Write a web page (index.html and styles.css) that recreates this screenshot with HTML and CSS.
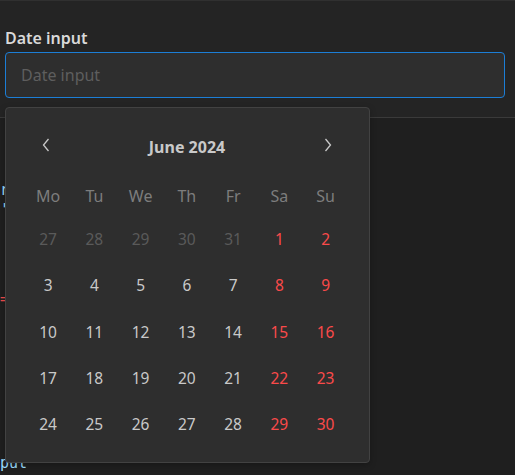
FILE: index.html
```html
<!DOCTYPE html>
<html>
<head>
<meta charset="utf-8">
<link rel="stylesheet" href="styles.css">
</head>
<body>
<div class="top">
  <label class="label">Date input</label>
  <div class="input"><span class="placeholder">Date input</span></div>
</div>
<div class="code">
  <div class="line l1"><span class="tk-blue">r</span></div>
  <div class="line l2"><span class="tk-blue">'</span></div>
  <div class="line l3"><span class="tk-red">=</span></div>
  <div class="line l4"><span class="tk-blue">put</span></div>
</div>
<div class="popover">
  <div class="header">
    <button class="ctrl prev"><svg width="8" height="14" viewBox="0 0 8 14"><path d="M6.5 1 L1.5 7 L6.5 13" fill="none" stroke="#c9c9c9" stroke-width="1.3"/></svg></button>
    <div class="title">June 2024</div>
    <button class="ctrl next"><svg width="8" height="14" viewBox="0 0 8 14"><path d="M1.5 1 L6.5 7 L1.5 13" fill="none" stroke="#c9c9c9" stroke-width="1.3"/></svg></button>
  </div>
  <div class="weekdays">
    <div>Mo</div><div>Tu</div><div>We</div><div>Th</div><div>Fr</div><div>Sa</div><div>Su</div>
  </div>
  <div class="days">
    <div class="out">27</div><div class="out">28</div><div class="out">29</div><div class="out">30</div><div class="out">31</div><div class="we">1</div><div class="we">2</div>
    <div>3</div><div>4</div><div>5</div><div>6</div><div>7</div><div class="we">8</div><div class="we">9</div>
    <div>10</div><div>11</div><div>12</div><div>13</div><div>14</div><div class="we">15</div><div class="we">16</div>
    <div>17</div><div>18</div><div>19</div><div>20</div><div>21</div><div class="we">22</div><div class="we">23</div>
    <div>24</div><div>25</div><div>26</div><div>27</div><div>28</div><div class="we">29</div><div class="we">30</div>
  </div>
</div>
</body>
</html>
```
FILE: styles.css
```css
html, body {
  margin: 0;
  padding: 0;
}
body {
  background: #1f1f1f;
  font-family: "Noto Sans", "Open Sans", sans-serif;
  width: 515px;
  height: 475px;
  overflow: hidden;
  position: relative;
}
.top {
  background: #242424;
  border-top: 1px solid #303030;
  border-bottom: 1px solid #3a3a3a;
  box-sizing: border-box;
  height: 118px;
  padding-top: 26px;
}
.label {
  display: block;
  margin-left: 5px;
  font-size: 16px;
  font-weight: 600;
  color: #d9d9d9;
  line-height: 22px;
}
.input {
  margin: 3px 0 0 5px;
  width: 500px;
  height: 46px;
  box-sizing: border-box;
  border: 1px solid #1c7ed6;
  border-radius: 4px;
  background: #2e2e2e;
  display: flex;
  align-items: center;
  padding-left: 15px;
}
.placeholder {
  font-size: 16px;
  color: #5e5e5e;
}
.code {
  font-family: "DejaVu Sans Mono", monospace;
  font-size: 15px;
  padding-top: 62px;
}
.line {
  height: 20px;
  line-height: 20px;
}
.l3 { margin-top: 69px; }
.l4 { margin-top: 144px; }
.tk-blue { color: #9cdcfe; }
.tk-red { color: #f14c4c; }
.popover {
  position: absolute;
  left: 5px;
  top: 107px;
  width: 365px;
  height: 356px;
  box-sizing: border-box;
  background: #2e2e2e;
  border: 1px solid #424242;
  border-radius: 4px;
  padding: 16px 20px 0 19px;
  box-shadow: 0 2px 6px rgba(0,0,0,0.25);
}
.header {
  display: flex;
  align-items: center;
  height: 46px;
}
.ctrl {
  width: 46px;
  height: 46px;
  background: none;
  border: 0;
  padding: 0;
  display: flex;
  align-items: center;
  justify-content: center;
}
.prev { margin-left: -2px; margin-right: 2px; margin-top: -4px; }
.next { margin-right: -2px; margin-left: 2px; margin-top: -4px; }
.title {
  flex: 1;
  text-align: center;
  font-size: 16px;
  font-weight: 700;
  color: #c9c9c9;
}
.weekdays, .days {
  display: grid;
  grid-template-columns: repeat(7, 46.25px);
}
.weekdays {
  margin-top: 6px;
}
.weekdays div {
  height: 40px;
  display: flex;
  align-items: center;
  justify-content: center;
  font-size: 16px;
  color: #7d7d7d;
}
.days div {
  height: 46.25px;
  display: flex;
  align-items: center;
  justify-content: center;
  font-size: 15.5px;
  color: #c9c9c9;
}
.days .out { color: #5a5a5a; }
.days .we { color: #fa4a4a; }
```
